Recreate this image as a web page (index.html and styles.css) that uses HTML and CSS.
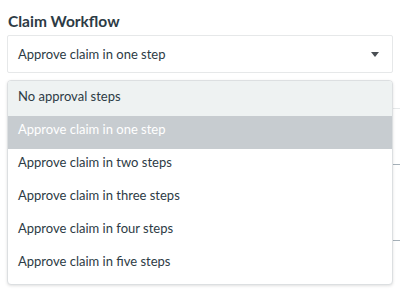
FILE: index.html
```html
<!DOCTYPE html>
<html lang="en">
<head>
  <meta charset="UTF-8">
  <title>Claim Workflow</title>
  <link rel="stylesheet" href="styles.css">
</head>
<body>

<div class="field">
  <div class="field-label">Claim Workflow</div>
  <div class="select-box">
    <span>Approve claim in one step</span>
    <span class="caret"></span>
  </div>

  <div class="behind">
    <div class="rule rule-light"></div>
    <div class="rule rule-dark rule-mid"></div>
    <div class="rule rule-dark rule-low"></div>
  </div>

  <ul class="dropdown">
    <li class="opt opt-first">No approval steps</li>
    <li class="opt opt-selected">Approve claim in one step</li>
    <li class="opt">Approve claim in two steps</li>
    <li class="opt">Approve claim in three steps</li>
    <li class="opt">Approve claim in four steps</li>
    <li class="opt">Approve claim in five steps</li>
  </ul>
</div>

</body>
</html>
```

FILE: styles.css
```css
body {
  margin: 0;
  font-family: Lato, "Open Sans", sans-serif;
  font-size: 13px;
  color: #2d3b45;
  background: #fff;
}
.field {
  position: relative;
  padding: 11px 7px 0 7px;
  height: 278px;
}
.field-label {
  font-weight: bold;
  font-size: 15.5px;
  line-height: 20px;
  padding-left: 1px;
  margin-bottom: 4px;
}
.select-box {
  height: 36px;
  border: 1px solid #e6e8e9;
  border-radius: 2px;
  display: flex;
  align-items: center;
  justify-content: space-between;
  padding: 0 13px 0 10px;
}
.caret {
  width: 0;
  height: 0;
  margin-top: 1px;
  border-left: 4px solid transparent;
  border-right: 4px solid transparent;
  border-top: 5px solid #4a4f54;
}
.behind {
  position: relative;
  margin: 0 -7px;
}
.rule {
  height: 1px;
  margin-left: 200px;
}
.rule-light {
  background: #e6e9ea;
  margin-top: 35px;
}
.rule-dark {
  background: #a5b0b8;
}
.rule-mid {
  margin-top: 55px;
}
.rule-low {
  margin-top: 75px;
}
.dropdown {
  position: absolute;
  top: 80px;
  left: 7px;
  right: 7px;
  margin: 0;
  padding: 0 0 3px 0;
  list-style: none;
  background: #fff;
  border: 1px solid #dcdfe1;
  border-radius: 4px;
  box-shadow: 0 1px 3px rgba(0, 0, 0, 0.12);
  overflow: hidden;
}
.opt {
  height: 27px;
  line-height: 27px;
  padding: 0 0 6px 10px;
}
.opt-first {
  height: 29px;
  line-height: 31px;
  background: #eef2f2;
}
.opt-selected {
  background: #c7ccd0;
  color: #fff;
}
```
